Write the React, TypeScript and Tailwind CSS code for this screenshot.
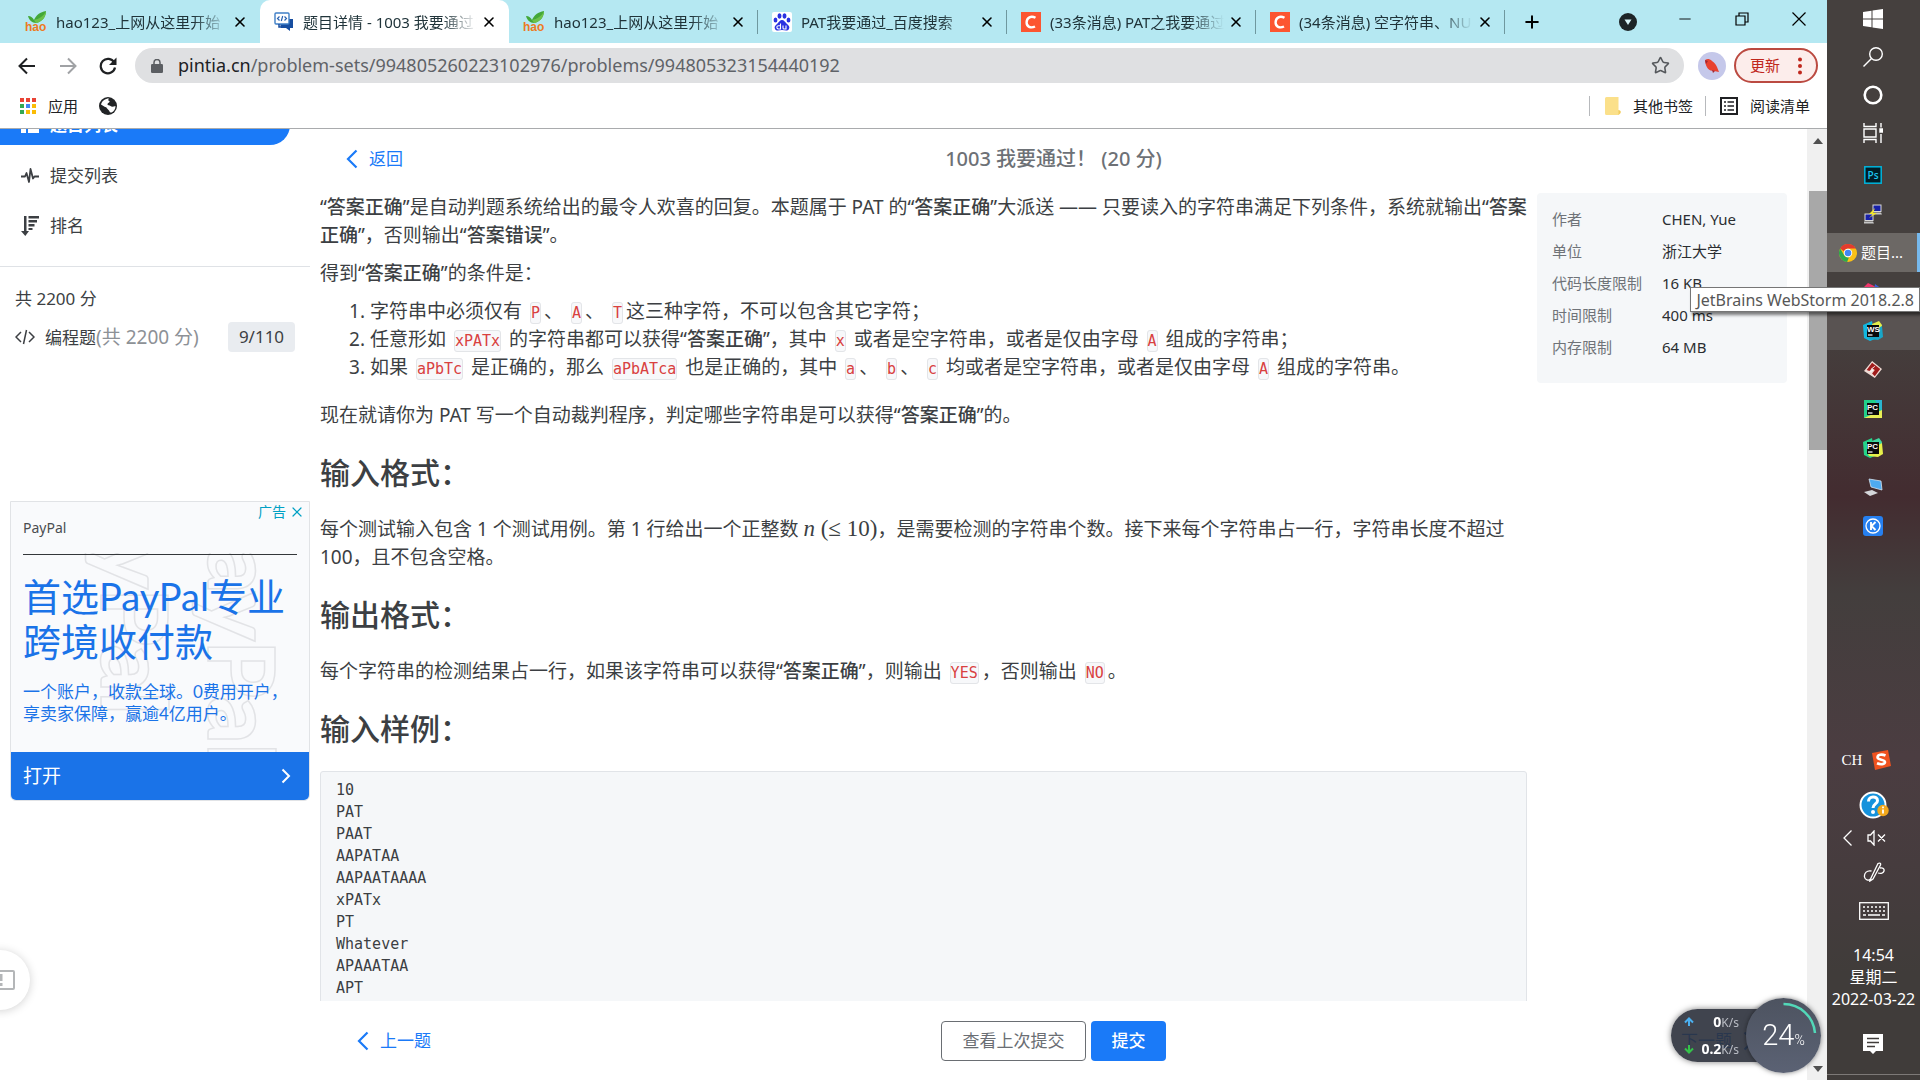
import React from 'react';
import { Star, X, Plus, Minus } from 'lucide-react';

type Kids = { children: React.ReactNode };

/* ---------- favicons ---------- */

const HaoIcon = () => (
  <svg viewBox="0 0 22 22" className="size-[22px] shrink-0" aria-hidden="true">
    <path d="M3 5c3 0 5 2 6 4C11 4 15 1 21 0c0 6-4 11-10 12C7 12 4 9 3 5z" fill="#43a838" />
    <path d="M9 9c1 1 1 2 2 3 6-1 10-6 10-12-2 5-7 8-12 9z" fill="#6cc24a" />
    <text x="0" y="20" fontSize="12" fontWeight="700" fontFamily="Liberation Sans, sans-serif" fill="#ee7a22">hao</text>
  </svg>
);

const PtaIcon = () => (
  <svg viewBox="0 0 20 20" className="size-5 shrink-0" aria-hidden="true">
    <path d="M5 7h14v9l-3 0v3l-4-3H7z" fill="#174ea0" />
    <rect x="1" y="1" width="14" height="11" rx="1" fill="#fff" stroke="#3f7fc6" strokeWidth="1.4" />
    <path d="M5.500 4.500 3.500 6.500l2 2M10.500 4.500l2 2-2 2M8.700 4l-1.400 5" fill="none" stroke="#2a62b0" strokeWidth="1.200" />
    <path d="M5 12v3h3" fill="none" stroke="#174ea0" strokeWidth="1.500" />
  </svg>
);

const BaiduIcon = () => (
  <svg viewBox="0 0 20 20" className="size-5 shrink-0" aria-hidden="true">
    <rect width="20" height="20" rx="2" fill="#fff" />
    <g fill="#2932e1">
      <ellipse cx="7.500" cy="4" rx="2" ry="2.700" />
      <ellipse cx="12.500" cy="4" rx="2" ry="2.700" />
      <ellipse cx="3.500" cy="8" rx="1.900" ry="2.500" />
      <ellipse cx="16.500" cy="8" rx="1.900" ry="2.500" />
      <path d="M10 8c2 0 3 2 4.500 3.500C17 13.500 18 15 17 17c-1.500 2.500-4.500 1-7 1s-5.500 1.500-7-1c-1-2 0-3.500 2.500-5.500C7 10 8 8 10 8z" />
    </g>
    <path d="M8.500 11.500V17H6.500a1.600 1.600 0 0 1 0-3.300H8.500M11 13.500V16q0 1 1 1h2v-3.500" fill="none" stroke="#fff" strokeWidth="1.100" />
  </svg>
);

const CsdnIcon = () => (
  <svg viewBox="0 0 20 20" className="size-5 shrink-0" aria-hidden="true">
    <rect width="20" height="20" fill="#fc5531" />
    <path d="M14.500 5.800C10 3.300 5.800 5.500 5.600 10.300c-.1 4.400 4 6.300 8.400 4.200" fill="none" stroke="#fff" strokeWidth="2.400" />
  </svg>
);

const TABS = [
  { icon: HaoIcon, title: 'hao123_上网从这里开始' },
  { icon: PtaIcon, title: '题目详情 - 1003 我要通过！', active: true },
  { icon: HaoIcon, title: 'hao123_上网从这里开始' },
  { icon: BaiduIcon, title: 'PAT我要通过_百度搜索' },
  { icon: CsdnIcon, title: '(33条消息) PAT之我要通过' },
  { icon: CsdnIcon, title: '(34条消息) 空字符串、NULL' },
];

function TabStrip() {
  return (
    <div className="flex h-[43px] bg-[#b5e8f2] pl-[11px] text-[15px] text-[#20343a]">
      {TABS.map((t, i) => (
        <div
          key={i}
          className={
            t.active
              ? 'relative flex w-[249px] items-center rounded-t-[10px] bg-white pl-[14px] pr-3 pt-px'
              : 'relative flex w-[249px] items-center pl-[14px] pr-3 pt-px'
          }
        >
          <t.icon />
          <span className="ml-[9px] min-w-0 flex-1 overflow-hidden whitespace-nowrap [mask-image:linear-gradient(to_right,black_80%,transparent)]">
            {t.title}
          </span>
          <button aria-label="关闭标签页" className="ml-1 flex size-4 items-center justify-center text-black">
            <X size={16} strokeWidth={2.4} />
          </button>
          {i > 1 && <span className="absolute right-0 top-[10px] h-6 w-px bg-[#6f989f]" />}
        </div>
      ))}
      <button aria-label="新标签页" className="flex w-[54px] items-center justify-center text-black">
        <Plus size={20} strokeWidth={2.4} />
      </button>
      <div className="flex-1" />
      <button aria-label="搜索标签页" className="flex w-[56px] items-center justify-center">
        <svg viewBox="0 0 18 18" className="size-[18px]">
          <circle cx="9" cy="9" r="9" fill="#1d2427" />
          <path d="M5.500 6.500h7L9 12z" fill="#d6f3f8" />
        </svg>
      </button>
      <button aria-label="最小化" className="flex h-[38px] w-[57px] items-center justify-center text-black">
        <Minus size={18} strokeWidth={1.2} />
      </button>
      <button aria-label="还原" className="flex h-[38px] w-[57px] items-center justify-center">
        <svg viewBox="0 0 14 14" className="size-[14px]" fill="none" stroke="#000" strokeWidth="1.200">
          <path d="M1 4h9v9H1zM4 4V1h9v9h-3" />
        </svg>
      </button>
      <button aria-label="关闭" className="flex h-[38px] w-[57px] items-center justify-center">
        <svg viewBox="0 0 14 14" className="size-[14px]" fill="none" stroke="#000" strokeWidth="1.200">
          <path d="M.5.5l13 13M13.500.5l-13 13" />
        </svg>
      </button>
    </div>
  );
}

function Toolbar() {
  return (
    <div className="flex h-[45px] items-center bg-white pl-[7px] pr-[9px]">
      <button aria-label="后退" className="flex w-10 justify-center">
        <svg viewBox="0 0 18 18" className="size-[18px]" fill="none" stroke="#1f2123" strokeWidth="2">
          <path d="M17 9H2M9 1.500 1.500 9 9 16.500" />
        </svg>
      </button>
      <button aria-label="前进" className="flex w-[41px] justify-center">
        <svg viewBox="0 0 18 18" className="size-[18px]" fill="none" stroke="#a0a2a5" strokeWidth="2">
          <path d="M1 9h15M9 1.500 16.500 9 9 16.500" />
        </svg>
      </button>
      <button aria-label="刷新" className="flex w-10 justify-center">
        <svg viewBox="0 0 18 18" className="size-[18px]">
          <path d="M15.200 5.500A7.200 7.200 0 1 0 16 10.500" fill="none" stroke="#1f2123" strokeWidth="2.200" />
          <path d="M17.500.5V8H10z" fill="#1f2123" />
        </svg>
      </button>
      <div className="ml-[7px] flex h-[35px] flex-1 items-center rounded-full bg-[#dfe0e2] pl-4 pr-[14px]">
        <svg viewBox="0 0 12 14" className="h-[14px] w-3 text-[#5b5e62]" fill="currentColor" aria-hidden="true">
          <rect x="0" y="5" width="12" height="9" rx="1.200" />
          <path d="M3 6V3.500a3 3 0 0 1 6 0V6" fill="none" stroke="currentColor" strokeWidth="1.500" />
        </svg>
        <span className="ml-[15px] flex-1 text-[18px] text-[#5f6368]">
          <span className="text-[#202124]">pintia.cn</span>/problem-sets/994805260223102976/problems/994805323154440192
        </span>
        <button aria-label="收藏">
          <Star size={19} strokeWidth={2} className="text-[#55585c]" />
        </button>
      </div>
      <button aria-label="个人资料" className="ml-[14px]">
        <svg viewBox="0 0 28 28" className="size-7">
          <circle cx="14" cy="14" r="14" fill="#c5c8ea" />
          <path d="M7 9c0-2 4-3 7 0 3 2 4 4 5 6l2 5-5-1c-5 0-8-3-9-10z" fill="#e8402f" />
          <path d="M7 8l3 1-2 3zM14 18l1 3 2-2z" fill="#a02633" />
        </svg>
      </button>
      <button className="ml-2 flex h-[35px] w-[84px] items-center rounded-full border-2 border-[#bb4a41] bg-[#fcedeb] pl-[14px] text-[15px] text-[#c0271c]">
        更新
        <svg viewBox="0 0 4 18" className="ml-[18px] h-[18px] w-1" fill="#c0271c">
          <circle cx="2" cy="2.500" r="2" />
          <circle cx="2" cy="9" r="2" />
          <circle cx="2" cy="15.500" r="2" />
        </svg>
      </button>
    </div>
  );
}

const APP_DOTS = ['#e94335', '#e94335', '#e94335', '#34a853', '#4285f4', '#fbbc05', '#34a853', '#fbbc05', '#fbbc05'];

function Bookmarks() {
  return (
    <div className="flex h-[41px] items-center border-b border-[#a9abad] bg-white pb-1 pl-5 pr-[17px] text-[15px] text-[#202124]">
      <button className="flex items-center gap-3">
        <span className="grid size-4 grid-cols-3 gap-[2px]">
          {APP_DOTS.map((c, i) => (
            <i key={i} style={{ background: c }} />
          ))}
        </span>
        应用
      </button>
      <button aria-label="网页书签" className="ml-[21px]">
        <svg viewBox="0 0 18 18" className="size-[18px]">
          <circle cx="9" cy="9" r="9" fill="#222426" />
          <path d="M10 1.500c-1 1-1 2.500.5 2.500.5 2-2 1.500-2 3.500 0 1 2 .5 3 1.500S14 10 16.500 9c0 3-1.500 5.500-4 6.500C10 16 11 14 9.500 13S8 10 6 10L2 7.500C3 4 6 1.500 10 1.500z" fill="#fff" />
        </svg>
      </button>
      <div className="flex-1" />
      <span className="h-5 w-px bg-[#b7b9bc]" />
      <button className="ml-[15px] flex items-center gap-3">
        <svg viewBox="0 0 16 18" className="h-[18px] w-4">
          <path d="M1.500 0h12v13l2 1v2l-2 2h-12Q0 18 0 16.500v-15Q0 0 1.500 0z" fill="#fbe08a" />
          <path d="M13.500 13v5l2-2v-2z" fill="#f2cb5d" />
        </svg>
        其他书签
      </button>
      <span className="ml-3 h-5 w-px bg-[#b7b9bc]" />
      <button className="ml-[14px] flex items-center gap-3">
        <svg viewBox="0 0 18 18" className="size-[18px]" fill="none" stroke="#202124">
          <rect x="1" y="1" width="16" height="16" strokeWidth="2" />
          <path d="M4 5h2M4 9h2M4 13h2M7.500 5H14M7.500 9H14M7.500 13H14" strokeWidth="1.700" />
        </svg>
        阅读清单
      </button>
    </div>
  );
}

/* ---------- sidebar ---------- */

function Ad() {
  return (
    <section aria-label="广告" className="relative ml-[10px] mt-[149px] flex h-[300px] w-[300px] flex-col overflow-hidden rounded-b-md border border-[#e1e3e6] bg-[#f9fafc]">
      <svg viewBox="0 0 298 250" className="absolute left-0 top-0 h-[250px] w-[298px]" fill="none" stroke="#e2e3e6" strokeWidth="1.500" aria-hidden="true">
        <g fontFamily="Lato, sans-serif" fontWeight="900" fontSize="92">
          <text transform="translate(90 38) rotate(90)">yPal</text>
          <text transform="translate(197 -12) rotate(90)">PayPal</text>
        </g>
        <path d="M0 0H298V51H0z" fill="#f9fafc" stroke="none" />
      </svg>
      <div className="relative flex h-[53px] flex-col px-3">
        <div className="absolute right-[2px] top-0 flex items-center gap-[3px] px-[2px] text-[14px] leading-5 text-[#00a0c4]">
          广告
          <button aria-label="关闭广告">
            <X size={16} strokeWidth={1.800} />
          </button>
        </div>
        <div className="mt-4 text-[14px] leading-5 text-[#4a4d50]">PayPal</div>
        <div className="mt-4 h-px shrink-0 bg-[#34373a]" />
      </div>
      <div className="relative ml-3 mt-[19px] whitespace-nowrap text-[38px] leading-[45px] text-[#1a73e8] font-[Lato,'Noto_Sans_CJK_SC',sans-serif]">
        首选PayPal专业
        <br />
        跨境收付款
      </div>
      <div className="relative ml-3 mt-[17px] whitespace-nowrap text-[17px] leading-[22px] text-[#1a73e8] font-[Lato,'Noto_Sans_CJK_SC',sans-serif]">
        一个账户，收款全球。0费用开户，
        <br />
        享卖家保障，赢逾4亿用户。
      </div>
      <button className="relative mt-auto flex h-12 shrink-0 items-center justify-between bg-[#1a73e8] pl-3 pr-[18px] text-[19px] text-white">
        打开
        <svg viewBox="0 0 10 16" className="h-4 w-[10px]" fill="none" stroke="#fff" strokeWidth="2">
          <path d="M1.500 1.500 8 8l-6.500 6.500" />
        </svg>
      </button>
    </section>
  );
}

function Sidebar() {
  return (
    <aside className="relative flex w-[310px] shrink-0 flex-col text-[17px] text-[#3c3f43]">
      <nav className="h-[138px] shrink-0 overflow-hidden border-b border-[#dfe2e6]">
        <a href="#list" className="-mt-6 flex h-10 w-[290px] items-center gap-[11px] rounded-r-[20px] bg-[#1a7af8] pl-[21px] font-bold text-white">
          <svg viewBox="0 0 18 18" className="size-[18px]" fill="#fff">
            <path d="M0 1h5v4H0zM0 7h5v4H0zM0 13h5v4H0zM7 1h11v4H7zM7 7h11v4H7zM7 13h11v4H7z" />
          </svg>
          题目列表
        </a>
        <a href="#submissions" className="mt-[6px] flex h-[50px] items-center gap-[11px] pl-[21px]">
          <svg viewBox="0 0 18 18" className="size-[18px]" fill="none" stroke="#3c3f43" strokeWidth="1.800" strokeLinejoin="round">
            <path d="M0 9.500h4L5.500 6l2.500 9L9.500 2l2.500 9.500 1.500-2H18" />
          </svg>
          提交列表
        </a>
        <a href="#rank" className="flex h-[50px] items-center gap-[11px] pl-[21px]">
          <svg viewBox="0 0 18 20" className="h-5 w-[18px]" fill="#3c3f43">
            <path d="M3 0h2.500v15H8l-3.700 5L0 15h3zM7.500 0H18v2.500H7.500zM7.500 4H16v2.500H7.500zM7.500 8h6v2.500h-6zM7.500 12h4v2h-4z" />
          </svg>
          排名
        </a>
      </nav>
      <div className="mt-[19px] pl-[15px] leading-[26px]">共 2200 分</div>
      <a href="#programming" className="mt-[10px] flex h-[30px] items-center pl-[15px] pr-[15px]">
        <svg viewBox="0 0 20 16" className="h-4 w-5" fill="none" stroke="#3c3f43" strokeWidth="1.500">
          <path d="M6 3 1 8l5 5M14 3l5 5-5 5M11.500 1l-3 14" />
        </svg>
        <span className="ml-[10px] flex-1 whitespace-nowrap">
          编程题<span className="text-[19px] leading-[26px] text-[#8d9196]">(共 2200 分)</span>
        </span>
        <span className="flex h-[30px] w-[67px] items-center justify-center rounded bg-[#e9ecf0]">9/110</span>
      </a>
      <Ad />
      <button aria-label="反馈" className="absolute -left-[30px] top-[821px] flex size-[60px] items-center justify-end rounded-full bg-white pr-[15px] shadow-[0_1px_10px_rgba(0,0,0,0.18)]">
        <svg viewBox="0 0 28 20" className="h-5 w-7" fill="none" stroke="#b4b6b8" strokeWidth="2">
          <rect x="1" y="1" width="26" height="18" rx="1" />
          <path d="M14 4v7M14 13v3" strokeWidth="3" />
        </svg>
      </button>
    </aside>
  );
}

/* ---------- problem ---------- */

const C = ({ children }: Kids) => (
  <code className="mx-[3px] rounded-[3px] border border-[#e3e5e8] bg-[#f7f8fa] py-px text-[15px] leading-none text-[#d9413f] font-['DejaVu_Sans_Mono',monospace]">
    {children}
  </code>
);
const B = ({ children }: Kids) => <b className="font-medium">{children}</b>;
const H = ({ children }: Kids) => <h2 className="mb-[22px] mt-6 text-[30px] font-medium leading-10">{children}</h2>;

const Chevron = () => (
  <svg viewBox="0 0 12 20" className="h-5 w-3" fill="none" stroke="currentColor" strokeWidth="2.200" aria-hidden="true">
    <path d="M10.500 1.500 2 10l8.500 8.500" />
  </svg>
);

const SAMPLE = ['10', 'PAT', 'PAAT', 'AAPATAA', 'AAPAATAAAA', 'xPATx', 'PT', 'Whatever', 'APAAATAA', 'APT', 'APATTAA'].join('\n');

const INFO: [string, string][] = [
  ['作者', 'CHEN, Yue'],
  ['单位', '浙江大学'],
  ['代码长度限制', '16 KB'],
  ['时间限制', '400 ms'],
  ['内存限制', '64 MB'],
];

function Problem() {
  return (
    <main className="flex min-w-0 flex-1 flex-col pl-[10px] pr-5 text-[#3c3f43]">
      <header className="grid h-[60px] shrink-0 grid-cols-[1fr_auto_1fr] items-center">
        <a href="#back" className="ml-[26px] flex items-center gap-[11px] text-[17px] text-[#1a7af8]">
          <Chevron />
          返回
        </a>
        <h1 className="text-[20px] font-medium text-[#6d7176]">1003 我要通过！ (20 分)</h1>
      </header>
      <div className="flex min-h-0 flex-1 gap-[10px] overflow-hidden pt-1">
        <article className="min-w-0 flex-1 text-[19px] leading-7">
          <p>
            “<B>答案正确</B>”是自动判题系统给出的最令人欢喜的回复。本题属于 PAT 的“<B>答案正确</B>”大派送 —— 只要读入的字符串满足下列条件，系统就输出“<B>答案正确</B>”，否则输出“<B>答案错误</B>”。
          </p>
          <p className="mt-[10px]">
            得到“<B>答案正确</B>”的条件是：
          </p>
          <ol className="mb-5 mt-[10px] list-decimal pl-[50px]">
            <li>
              字符串中必须仅有 <C>P</C>、 <C>A</C>、 <C>T</C>这三种字符，不可以包含其它字符；
            </li>
            <li>
              任意形如 <C>xPATx</C> 的字符串都可以获得“<B>答案正确</B>”，其中 <C>x</C> 或者是空字符串，或者是仅由字母 <C>A</C> 组成的字符串；
            </li>
            <li>
              如果 <C>aPbTc</C> 是正确的，那么 <C>aPbATca</C> 也是正确的，其中 <C>a</C>、 <C>b</C>、 <C>c</C> 均或者是空字符串，或者是仅由字母 <C>A</C> 组成的字符串。
            </li>
          </ol>
          <p>
            现在就请你为 PAT 写一个自动裁判程序，判定哪些字符串是可以获得“<B>答案正确</B>”的。
          </p>
          <H>输入格式：</H>
          <p>
            每个测试输入包含 1 个测试用例。第 1 行给出一个正整数{' '}
            <span className="text-[23px] leading-none font-['Liberation_Serif',serif]">
              <i>n</i> (≤ 10)
            </span>
            ，是需要检测的字符串个数。接下来每个字符串占一行，字符串长度不超过 100，且不包含空格。
          </p>
          <H>输出格式：</H>
          <p>
            每个字符串的检测结果占一行，如果该字符串可以获得“<B>答案正确</B>”，则输出 <C>YES</C>，否则输出 <C>NO</C>。
          </p>
          <H>输入样例：</H>
          <pre className="rounded-[3px] border border-[#e1e4e8] bg-[#f5f7f9] px-[15px] py-[7px] text-[15px] leading-[22px] font-['DejaVu_Sans_Mono',monospace]">
            {SAMPLE}
          </pre>
        </article>
        <dl className="grid w-[250px] shrink-0 grid-cols-[110px_1fr] self-start rounded bg-[#f5f7f9] px-[15px] pb-5 pt-[10px] text-[15px] leading-8">
          {INFO.map(([k, v]) => (
            <React.Fragment key={k}>
              <dt className="text-[#6f7378]">{k}</dt>
              <dd className="text-[#2b2e31]">{v}</dd>
            </React.Fragment>
          ))}
        </dl>
      </div>
      <footer className="grid h-[79px] shrink-0 grid-cols-[1fr_auto_1fr] items-center bg-white text-[17px]">
        <a href="#prev" className="ml-[37px] flex items-center gap-[11px] text-[#1a7af8]">
          <Chevron />
          上一题
        </a>
        <div className="flex gap-[5px]">
          <button className="h-10 w-[145px] rounded border border-[#6a6e73] text-[17px] text-[#6a6e73]">查看上次提交</button>
          <button className="h-10 w-[75px] rounded bg-[#1a7af8] font-medium text-white">提交</button>
        </div>
        <a href="#next" className="mr-8 flex items-center justify-end gap-[11px] text-[#1a7af8]">
          下一题
          <span className="rotate-180">
            <Chevron />
          </span>
        </a>
      </footer>
    </main>
  );
}

function Scrollbar() {
  return (
    <div className="flex w-5 shrink-0 flex-col items-center bg-[#f0f0f0] pl-[2px]" aria-hidden="true">
      <svg viewBox="0 0 10 6" className="mt-[9px] h-[6px] w-[10px]" fill="#505050">
        <path d="M0 6l5-6 5 6z" />
      </svg>
      <div className="mt-[47px] h-[259px] w-full bg-[#a8a8a8]" />
      <svg viewBox="0 0 10 6" className="mb-2 mt-auto h-[6px] w-[10px]" fill="#505050">
        <path d="M0 0l5 6 5-6z" />
      </svg>
    </div>
  );
}

function SpeedWidget() {
  return (
    <div className="fixed bottom-[7px] right-[99px] flex items-center text-white">
      <div className="-mr-7 flex h-[53px] w-[103px] flex-col justify-center rounded-l-full bg-[#2b303b]/90 pl-[13px] pr-[35px] shadow-[0_0_6px_rgba(0,0,0,0.500)]">
        <div className="flex items-center justify-between text-[14px] font-bold leading-[26px]">
          <svg viewBox="0 0 10 10" className="size-[10px]" fill="none" stroke="#4bb0f0" strokeWidth="2">
            <path d="M5 9V2M1 5.500 5 1.500l4 4" />
          </svg>
          <span>
            0<span className="text-[12px] font-normal text-[#b9bcc4]">K/s</span>
          </span>
        </div>
        <div className="flex items-center justify-between whitespace-nowrap text-[14px] font-bold leading-[26px]">
          <svg viewBox="0 0 10 10" className="size-[10px] shrink-0" fill="none" stroke="#35c24a" strokeWidth="2">
            <path d="M5 1v7M1 4.500l4 4 4-4" />
          </svg>
          <span>
            0.2<span className="text-[12px] font-normal text-[#b9bcc4]">K/s</span>
          </span>
        </div>
      </div>
      <div className="relative flex size-[75px] items-center justify-center rounded-full bg-linear-to-b from-[#4d5360] to-[#5b6274] shadow-[0_0_5px_rgba(0,0,0,0.500)]">
        <svg viewBox="0 0 75 75" className="absolute inset-0 size-[75px]" fill="none" stroke="#52d8b8" strokeWidth="2.500" aria-hidden="true">
          <path d="M37.500 6A31.500 31.500 0 0 1 69 35" />
        </svg>
        <span className="text-[29px] font-light font-['Roboto',sans-serif]">
          24<span className="text-[14px]">%</span>
        </span>
      </div>
    </div>
  );
}

/* ---------- taskbar ---------- */

const WinIcon = () => (
  <svg viewBox="0 0 20 20" className="size-5" fill="#fff"><path d="M0 3l8.500-1.300v7.800H0zM9.500 1.500 20 0v9.500H9.500zM0 10.500h8.500v7.800L0 17zM9.500 10.500H20V20L9.500 18.500z" /></svg>
);
const FindIcon = () => (
  <svg viewBox="0 0 20 20" className="size-5" fill="none" stroke="#fff" strokeWidth="1.400"><circle cx="13" cy="7" r="6.300" /><path d="M8.500 11.500.5 19.500" /></svg>
);
const CortanaIcon = () => (
  <svg viewBox="0 0 20 20" className="size-5" fill="none" stroke="#fff" strokeWidth="2.600"><circle cx="10" cy="10" r="8.300" /></svg>
);
const TaskViewIcon = () => (
  <svg viewBox="0 0 20 20" className="size-5" fill="none" stroke="#fff" strokeWidth="1.400"><path d="M1 0v3.500h12V0M1 20v-3.500h12V20M1 6h12v8H1zM18 0v4.500M18 11v9" /><path d="M17 6h2.500v3H17z" fill="#fff" /></svg>
);
const PsIcon = () => (
  <svg viewBox="0 0 18 18" className="size-[18px]"><rect x=".8" y=".8" width="16.400" height="16.400" fill="#001d26" stroke="#00b5dd" strokeWidth="1.500" /><text x="3.500" y="13" fontSize="10" fontFamily="Open Sans, sans-serif" fontWeight="600" fill="#1cc5f0">Ps</text></svg>
);
const PuttyIcon = () => (
  <svg viewBox="0 0 20 20" className="size-5"><g stroke="#d8d8d8" strokeWidth="1" fill="#1720a8"><rect x="10" y="1" width="8" height="6.500" /><rect x="2" y="10" width="8" height="6.500" /></g><path d="M10 8.500h8l1 2H10zM1 17.500h9l1 2H1z" fill="#c7c7c7" /><path d="M12 4 6 10h4l-4 4 8-5h-4z" fill="#f5ea28" /></svg>
);
const ChromeIcon = () => (
  <svg viewBox="0 0 20 20" className="size-[18px] shrink-0"><circle cx="10" cy="10" r="10" fill="#fbc116" /><path d="M1.300 5A10 10 0 0 1 18.700 5H10a5 5 0 0 0-4.700 3z" fill="#e33b2e" /><path d="M1.300 5 5.700 12.500A5 5 0 0 0 11 15l-2 4.950A10 10 0 0 1 1.300 5z" fill="#2da94f" /><circle cx="10" cy="10" r="4.700" fill="#fff" /><circle cx="10" cy="10" r="3.700" fill="#4286f4" /></svg>
);
const IdeaIcon = () => (
  <svg viewBox="0 0 20 20" className="size-5"><path d="M1 5 5 1l8 4-3 8z" fill="#f2356b" /><path d="M12 2l7 5-2 9-6-6z" fill="#3a62d8" /></svg>
);

type JetBrainsProps = { left: string; top: string; bottom: string; label: string; framed?: boolean };
const JetBrainsIcon = ({ left, top, bottom, label, framed }: JetBrainsProps) => (
  <svg viewBox="0 0 20 20" className="size-5">
    {framed ? (
      <>
        <path d="M1 1h18v18H1z" fill={left} />
        <path d="M12 1h7v12z" fill={top} />
        <path d="M1 19l18-8v8z" fill={bottom} />
      </>
    ) : (
      <>
        <path d="M0 4l9-4 3 18-5 2-6-3z" fill={left} />
        <path d="M9 3l7-3 3 4-1 8-8 2z" fill={top} />
        <path d="M4 14l15-9 1 11-5 3-9-1z" fill={bottom} />
      </>
    )}
    <rect x="4" y="4" width="12" height="12" fill="#0a0a0a" />
    <text x="4" y="10.500" fontSize="8" fontWeight="700" fontFamily="Liberation Sans, sans-serif" fill="#fff">{label}</text>
    <path d="M5 14h4.500" stroke="#fff" strokeWidth="1.200" />
  </svg>
);
const WsIcon = () => <JetBrainsIcon left="#12b8e0" top="#e4ee4a" bottom="#18a6c8" label="WS" />;
const PyEduIcon = () => <JetBrainsIcon left="#22d08a" top="#2ab5d0" bottom="#e9ee55" label="PC" framed />;
const PyIcon = () => <JetBrainsIcon left="#25d489" top="#3fd6a0" bottom="#e6f04a" label="PC" />;
const RedIcon = () => (
  <svg viewBox="0 0 20 20" className="size-[18px]"><path d="M9 0l11 9-8 10L0 11z" fill="#f0dcd6" /><path d="M9 2l9 7-6 8-3-3 3-4-3-2-3 3-3-1z" fill="#a01c1c" /><path d="M8 9l4-3M7 12l3-2" stroke="#fff" /></svg>
);
const RemoteIcon = () => (
  <svg viewBox="0 0 20 18" className="h-[18px] w-5"><path d="M6 1l12 2 1 9-11-3z" fill="#4eaaf0" stroke="#d5e4f0" strokeWidth=".8" /><path d="M1 14l8-2 6 3-8 3z" fill="#d5d7da" /></svg>
);
const KIcon = () => (
  <svg viewBox="0 0 20 20" className="size-5"><rect width="20" height="20" rx="3" fill="#2680f0" /><circle cx="10" cy="10" r="7" fill="none" stroke="#fff" strokeWidth="1.300" /><path d="M8 6v8M12.500 6 8.500 10l4 4" fill="none" stroke="#fff" strokeWidth="1.900" /></svg>
);

const SYSTEM = [
  { label: '开始', icon: WinIcon },
  { label: '搜索', icon: FindIcon },
  { label: 'Cortana', icon: CortanaIcon },
  { label: '任务视图', icon: TaskViewIcon },
];
const APPS = [
  { label: 'Photoshop', icon: PsIcon },
  { label: 'PuTTY', icon: PuttyIcon },
  { label: 'Chrome', icon: ChromeIcon, text: '题目...' },
  { label: 'IntelliJ IDEA', icon: IdeaIcon },
  { label: 'WebStorm', icon: WsIcon, hover: true },
  { label: 'RedPanda', icon: RedIcon },
  { label: 'PyCharm Edu', icon: PyEduIcon },
  { label: 'PyCharm', icon: PyIcon },
  { label: '远程桌面', icon: RemoteIcon },
  { label: '酷狗', icon: KIcon },
];

function Taskbar() {
  return (
    <aside className="relative flex w-[93px] shrink-0 flex-col bg-[linear-gradient(to_bottom,#45403e_0%,#45403e_30%,#432c30_46%,#433e3d_55%,#4b3d41_70%,#463c3e_80%,#403c3a_90%)] text-white">
      {SYSTEM.map(({ label, icon: Icon }) => (
        <button key={label} aria-label={label} className="flex h-[38px] w-full items-center justify-center pr-[2px]">
          <Icon />
        </button>
      ))}
      <div className="mt-[3px]">
        {APPS.map(({ label, icon: Icon, text, hover }) => (
          <button
            key={label}
            aria-label={label}
            className={
              text
                ? 'flex h-[39px] w-full items-center justify-center gap-1 border-r-[3px] border-[#76b9ed] bg-[#6c6865] pr-[2px] text-[15px]'
                : hover
                  ? 'flex h-[39px] w-full items-center justify-center bg-[#595352] pr-[2px]'
                  : 'flex h-[39px] w-full items-center justify-center pr-[2px]'
            }
          >
            <Icon />
            {text}
          </button>
        ))}
      </div>
      <div role="tooltip" className="absolute right-0 top-[287px] z-10 flex h-[25px] items-center whitespace-nowrap border border-[#767676] bg-white px-[5px] text-[16px] text-[#575757] shadow-[2px_3px_3px_rgba(0,0,0,0.500)]">
        JetBrains WebStorm 2018.2.8
      </div>

      <div className="mt-auto flex flex-col items-center">
        <div className="flex h-9 items-center gap-[9px] pr-[14px]">
          <span className="text-[15px] font-['Liberation_Serif',serif]">CH</span>
          <svg viewBox="0 0 20 20" className="size-5">
            <path d="M1 3 17 0l3 16-16 4z" fill="#f0521f" />
            <path d="M14.500 5.500C11 4 6.500 4.500 6.500 7.300c0 3 7.500 1.700 7.500 4.700 0 2.500-4.500 2.800-8 1.300" fill="none" stroke="#fff" strokeWidth="2.600" />
          </svg>
        </div>
        <svg viewBox="0 0 30 28" className="mt-[13px] h-7 w-[30px]">
          <circle cx="14" cy="14" r="12.500" fill="#1592dc" stroke="#fff" strokeWidth="2" />
          <path d="M9.500 10.500c0-6 9-6 9-.8 0 3.300-4.500 3.300-4.500 7.300" fill="none" stroke="#fff" strokeWidth="3" />
          <circle cx="14" cy="21" r="2" fill="#fff" />
          <circle cx="24" cy="19.500" r="5.700" fill="#f2a81d" />
          <path d="M24 18.500v4M24 15.500v1.800" stroke="#fff" strokeWidth="1.800" />
        </svg>
        <div className="mt-[10px] flex h-[18px] items-center gap-[15px] pr-[18px]">
          <svg viewBox="0 0 9 16" className="h-4 w-[9px]" fill="none" stroke="#fff" strokeWidth="1.300"><path d="M8.500.5 1 8l7.500 7.500" /></svg>
          <svg viewBox="0 0 20 16" className="h-4 w-5" fill="none" stroke="#fff" strokeWidth="1.300"><path d="M1 5h2.500L7 1v14l-3.500-4H1zM11 4.500l7 7M18 4.500l-7 7" /></svg>
        </div>
        <svg viewBox="0 0 22 20" className="mt-[15px] h-5 w-[22px]" fill="none" stroke="#fff" strokeWidth="1.300">
          <path d="M8 16 15 1.500c2-1 3 0 2.500 1.500L10 17l-3 2zM8.500 9C4 8 1 11 1.500 15c.5 3 4 4 6 2M17 6c3-.5 4.500 1 4 3s-3 3-6 2" />
        </svg>
        <svg viewBox="0 0 30 18" className="mt-5 h-[18px] w-[30px]" fill="none" stroke="#fff" strokeWidth="1.300">
          <rect x=".7" y=".7" width="28.600" height="16.600" />
          <path d="M4 5h22M4 9h22" strokeDasharray="2 2" />
          <path d="M4 13h3M9 13h12M23 13h3" />
        </svg>
        <div className="mt-6 text-center text-[16px] leading-[22px]">
          14:54
          <br />
          星期二
          <br />
          2022-03-22
        </div>
        <button aria-label="通知" className="mt-6 pr-[2px]">
          <svg viewBox="0 0 20 20" className="size-5">
            <path d="M0 0h20v17h-7l-3 3-3-3H0z" fill="#fff" />
            <path d="M4 4.500h12M4 8.500h12M4 12.500h8" stroke="#403c3a" strokeWidth="1.300" />
          </svg>
        </button>
        <div className="mb-[5px] mt-[20px] h-px w-full bg-[#7d7977]" />
      </div>
    </aside>
  );
}

export default function App() {
  return (
    <div lang="zh-CN" className="flex h-screen w-full overflow-hidden bg-white font-['Noto_Sans','Noto_Sans_CJK_SC',sans-serif]">
      <div className="flex min-w-0 flex-1 flex-col">
        <TabStrip />
        <Toolbar />
        <Bookmarks />
        <div className="flex min-h-0 flex-1 overflow-hidden">
          <Sidebar />
          <Problem />
          <Scrollbar />
        </div>
      </div>
      <Taskbar />
      <SpeedWidget />
    </div>
  );
}
